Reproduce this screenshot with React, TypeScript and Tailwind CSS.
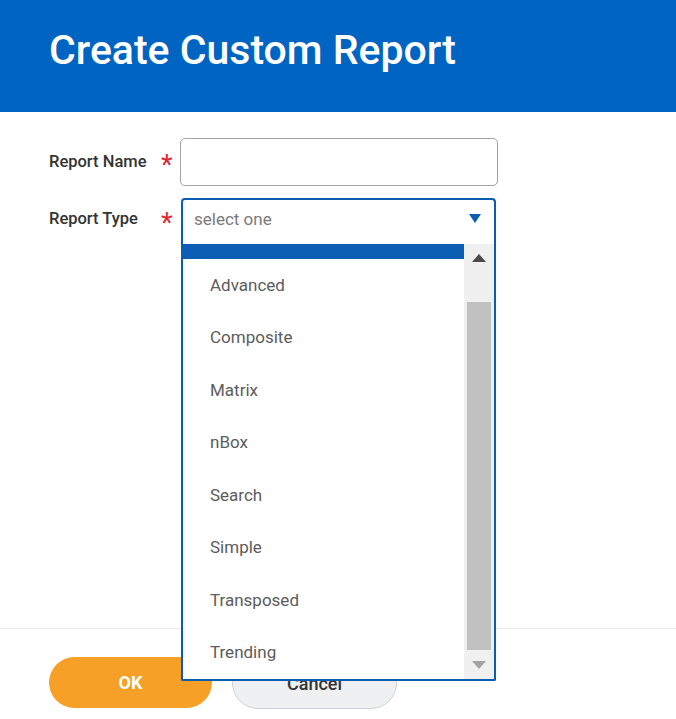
const options = [
  "Advanced",
  "Composite",
  "Matrix",
  "nBox",
  "Search",
  "Simple",
  "Transposed",
  "Trending",
];

function Required() {
  return <span className="text-[27px] leading-none text-[#e0262e]">*</span>;
}

export default function App() {
  return (
    <div className="min-h-[719px] bg-white font-['Roboto',sans-serif]">
      {/* Header */}
      <div className="flex h-[112px] items-center bg-[#0065c2] px-[49px] pb-[10px]">
        <h1 className="text-[41px] font-medium text-white">
          Create Custom Report
        </h1>
      </div>

      {/* Form */}
      <div className="flex h-[516px] flex-col gap-[12px] pt-[26px]">
        <div className="flex items-center">
          <label className="w-[112px] pl-[49px] text-[16.5px] font-medium text-[#333] box-content">
            Report Name
          </label>
          <div className="flex w-[19px] justify-start pt-[6px]">
            <Required />
          </div>
          <input className="h-[48px] w-[318px] rounded-[5px] border border-[#a3a3a3] outline-none" />
        </div>

        <div className="flex items-start">
          <label className="mt-[9px] w-[112px] pl-[49px] text-[16.5px] font-medium text-[#333] box-content">
            Report Type
          </label>
          <div className="mt-[12px] flex w-[20px] justify-start">
            <Required />
          </div>

          {/* Select with open list */}
          <div className="relative w-[315px]">
            <div className="flex h-[46px] items-start justify-between rounded-t-[4px] border-x-2 border-t-2 border-[#0b5db3] pl-[11px] pr-[13px] pt-[7px]">
              <span className="text-[17px] text-[#7a7a7a]">select one</span>
              <svg width="12" height="9" viewBox="0 0 12 9" className="mt-[7px]">
                <path d="M0 0h12L6 9z" fill="#0b5db3" />
              </svg>
            </div>
            <div className="absolute left-0 top-full z-10 flex w-[315px] border-x-2 border-b-2 border-[#0b5db3] bg-white rounded-b-[2px]">
              <div className="flex-1">
                <div className="h-[15px] bg-[#0b5db3]" />
                {options.map((o) => (
                  <div
                    key={o}
                    className="flex h-[52.5px] items-center pl-[27px] text-[17px] text-[#5c5c5c]"
                  >
                    {o}
                  </div>
                ))}
              </div>
              {/* Scrollbar */}
              <div className="flex w-[30px] flex-col bg-[#f0f0f0]">
                <div className="flex h-[26px] items-center justify-center pt-[2px]">
                  <svg width="14" height="8" viewBox="0 0 14 8">
                    <path d="M7 0l7 8H0z" fill="#4a4a4a" />
                  </svg>
                </div>
                <div className="h-[32px]" />
                <div className="mx-[3px] flex-1 bg-[#c1c1c1]" />
                <div className="flex h-[29px] items-center justify-center">
                  <svg width="14" height="8" viewBox="0 0 14 8">
                    <path d="M0 0h14L7 8z" fill="#a3a3a3" />
                  </svg>
                </div>
              </div>
            </div>
          </div>
        </div>
      </div>

      {/* Footer */}
      <div className="flex gap-[20px] border-t border-[#e8e8e8] px-[49px] pt-[28px]">
        <button className="h-[51px] w-[163px] rounded-full bg-[#f7a028] text-[18px] font-bold text-white">
          OK
        </button>
        <button className="h-[52px] w-[165px] rounded-full border border-[#cdd3d8] bg-[#eef0f2] text-[18px] font-medium text-[#333]">
          Cancel
        </button>
      </div>
    </div>
  );
}
